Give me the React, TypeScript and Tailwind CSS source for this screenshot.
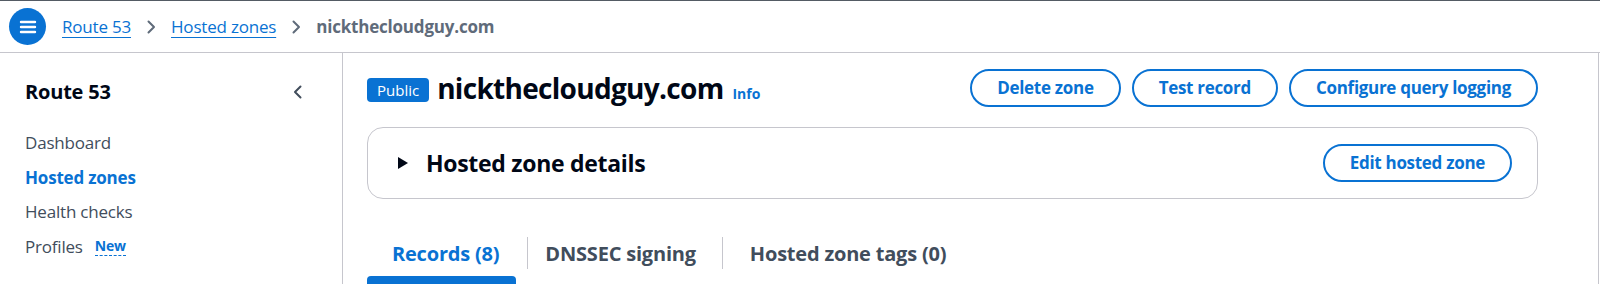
import React from "react";

const font = { fontFamily: '"Open Sans", "Noto Sans", Arial, sans-serif' };

function Chevron() {
  return (
    <svg width="16" height="16" viewBox="0 0 16 16" fill="none" stroke="#5f6b7a" strokeWidth="2" strokeLinecap="round" strokeLinejoin="round">
      <path d="M5.5 2.5 11 8l-5.5 5.5" />
    </svg>
  );
}

const btn =
  "h-[38px] px-[25px] rounded-full border-2 border-[#0972d3] text-[#0972d3] font-bold text-[17px] tracking-[-0.3px] bg-white";

export default function App() {
  return (
    <div className="w-[1600px] h-[284px] overflow-hidden bg-white" style={font}>
      <div className="h-[53px] border-t border-t-[#545b64] border-b border-b-[#c6c6cd] flex items-center pl-[9px]">
        <div className="w-[37px] h-[37px] rounded-full bg-[#0972d3] flex items-center justify-center">
          <svg width="18" height="16" viewBox="0 0 18 16" fill="none" stroke="white" strokeWidth="2.4" strokeLinecap="round">
            <path d="M2 3h14M2 8h14M2 13h14" />
          </svg>
        </div>
        <nav className="flex items-center ml-[16px] text-[17px] tracking-[-0.2px]">
          <a className="text-[#0972d3] underline underline-offset-[4px] decoration-1">Route 53</a>
          <span className="mx-[12px] flex"><Chevron /></span>
          <a className="text-[#0972d3] underline underline-offset-[4px] decoration-1">Hosted zones</a>
          <span className="mx-[12px] flex"><Chevron /></span>
          <span className="text-[#5f6b7a] font-bold">nickthecloudguy.com</span>
        </nav>
      </div>
      <div className="flex h-[231px]">
        <aside className="w-[343px] shrink-0 border-r border-r-[#c6c6cd] pl-[25px] pr-[36px] pt-[24px]">
          <div className="flex items-center justify-between h-[30px]">
            <h2 className="text-[20px] font-bold text-[#000716] tracking-[-0.2px]">Route 53</h2>
            <svg width="16" height="16" viewBox="0 0 16 16" fill="none" stroke="#414d5c" strokeWidth="2" strokeLinecap="round" strokeLinejoin="round">
              <path d="M10.5 2.5 5 8l5.5 5.5" />
            </svg>
          </div>
          <ul className="mt-[24px] flex flex-col gap-[10.5px] text-[17px] tracking-[-0.2px]">
            <li className="text-[#414d5c] leading-[24px]">Dashboard</li>
            <li className="text-[#0972d3] font-bold leading-[24px]">Hosted zones</li>
            <li className="text-[#414d5c] leading-[24px]">Health checks</li>
            <li className="text-[#414d5c] leading-[24px] flex items-center gap-[12px]">
              Profiles
              <span className="text-[#0972d3] font-bold text-[14px] border-b border-dashed border-[#0972d3] leading-[18px]">New</span>
            </li>
          </ul>
        </aside>
        <main className="flex-1 border-r border-r-[#c6c6cd] pl-[24px] pr-[60px] pt-[16px] mr-[1px]">
          <div className="flex items-center justify-between h-[38px]">
            <div className="flex items-center">
              <span className="bg-[#0972d3] text-white text-[15px] rounded-[4px] px-[10px] h-[24px] flex items-center mt-[4px]">Public</span>
              <h1 className="ml-[8px] text-[28px] font-bold text-[#000716] tracking-[-0.7px]">nickthecloudguy.com</h1>
              <span className="ml-[9px] mt-[10px] text-[14px] font-bold text-[#0972d3]">Info</span>
            </div>
            <div className="flex gap-[11px]">
              <button className={btn}>Delete zone</button>
              <button className={btn}>Test record</button>
              <button className={btn}>Configure query logging</button>
            </div>
          </div>
          <div className="mt-[20px] h-[72px] border border-[#c6c6cd] rounded-[16px] flex items-center justify-between pl-[29px] pr-[25px]">
            <div className="flex items-center">
              <svg width="12" height="14" viewBox="0 0 12 14">
                <path d="M1 1 11 7 1 13Z" fill="#000716" />
              </svg>
              <h2 className="ml-[17px] text-[23px] font-bold text-[#000716] tracking-[-0.3px]">Hosted zone details</h2>
            </div>
            <button className={btn}>Edit hosted zone</button>
          </div>
          <div className="mt-[33px] flex items-start text-[20px] font-bold tracking-[-0.2px]">
            <div className="relative pl-[25px] pr-[17px] h-[44px] flex items-center">
              <span className="text-[#0972d3]">Records (8)</span>
              <div className="absolute left-0 right-0 bottom-[-8px] h-[8px] rounded-t-[4px] bg-[#0972d3]" />
            </div>
            <div className="ml-[11px] w-px h-[32px] bg-[#c6c6cd] mt-[5px]" />
            <div className="pl-[17px] pr-[26px] h-[44px] flex items-center text-[#414d5c]">DNSSEC signing</div>
            <div className="w-px h-[32px] bg-[#c6c6cd] mt-[5px]" />
            <div className="pl-[27px] pr-[26px] h-[44px] flex items-center text-[#414d5c]">Hosted zone tags (0)</div>
          </div>
        </main>
      </div>
    </div>
  );
}
